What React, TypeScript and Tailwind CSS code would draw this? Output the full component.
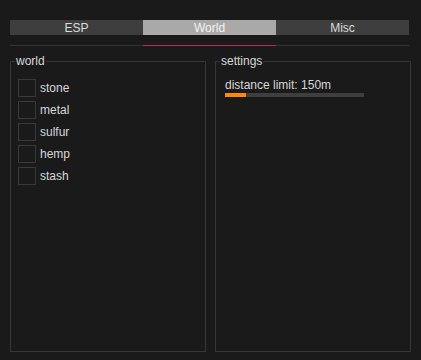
import React, { useState } from 'react';

const tabs = ['ESP', 'World', 'Misc'];
const worldItems = ['stone', 'metal', 'sulfur', 'hemp', 'stash'];

const Checkbox: React.FC<{ label: string; checked: boolean; onToggle: () => void }> = ({ label, checked, onToggle }) => (
  <button onClick={onToggle} className="flex items-center gap-[4px] h-[18px] text-left focus:outline-none">
    <span className={`w-[18px] h-[18px] border border-[#3a3a3a] ${checked ? 'bg-[#c2255c]' : 'bg-transparent'}`} />
    <span className="text-[12px] leading-none text-[#d8d8d8]">{label}</span>
  </button>
);

export default function App() {
  const [activeTab, setActiveTab] = useState('World');
  const [checked, setChecked] = useState<Record<string, boolean>>({});
  const distance = 150;
  const maxDistance = 1000;

  return (
    <div className="w-[421px] h-[360px] bg-[#1a1a1a] px-[10px] pt-[20px] overflow-hidden" style={{ fontFamily: '"Liberation Sans", Arial, sans-serif' }}>
      {/* Tabs */}
      <div className="flex w-[399px] h-[15px]">
        {tabs.map((tab) => (
          <button
            key={tab}
            onClick={() => setActiveTab(tab)}
            className={`flex-1 flex items-center justify-center text-[12px] leading-none focus:outline-none ${
              activeTab === tab ? 'bg-[#a9a9a9] text-[#f4f4f4]' : 'bg-[#3e3e3e] text-[#dcdcdc]'
            }`}
          >
            {tab}
          </button>
        ))}
      </div>

      {/* Tab underline */}
      <div className="flex w-[399px] h-px mt-[10px] bg-[#333333]">
        {tabs.map((tab) => (
          <div key={tab} className={`flex-1 ${activeTab === tab ? 'bg-[#c2255c]' : ''}`} />
        ))}
      </div>

      {/* Groups */}
      <div className="flex gap-[9px] mt-[8px]">
        <fieldset className="w-[196px] h-[298px] border border-[#363636] pl-[7px] pr-[7px] m-0">
          <legend className="ml-[-3px] px-[1px] text-[12px] leading-[14px] text-[#d8d8d8]">world</legend>
          <div className="flex flex-col gap-[4px] mt-[11px]">
            {worldItems.map((item) => (
              <Checkbox
                key={item}
                label={item}
                checked={!!checked[item]}
                onToggle={() => setChecked({ ...checked, [item]: !checked[item] })}
              />
            ))}
          </div>
        </fieldset>

        <fieldset className="w-[196px] h-[298px] border border-[#363636] pl-[9px] pr-[9px] m-0">
          <legend className="ml-[-5px] px-[1px] text-[12px] leading-[14px] text-[#d8d8d8]">settings</legend>
          <div className="flex flex-col mt-[10px]">
            <span className="text-[12px] leading-[14px] text-[#d8d8d8]">distance limit: {distance}m</span>
            <div className="w-[139px] h-[4px] bg-[#3e3e3e] mt-[1px]">
              <div className="h-full bg-[#ff8a00]" style={{ width: `${(distance / maxDistance) * 139}px` }} />
            </div>
          </div>
        </fieldset>
      </div>
    </div>
  );
}
